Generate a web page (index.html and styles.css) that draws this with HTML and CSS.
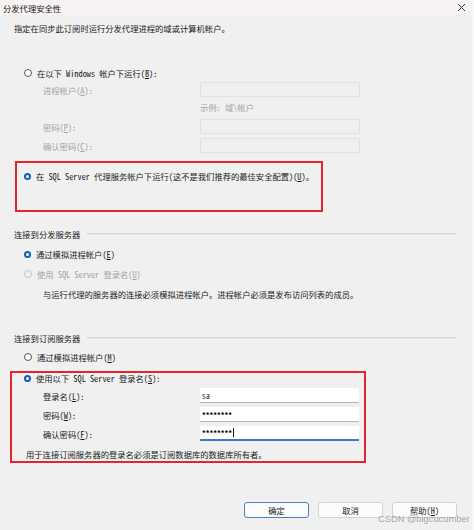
FILE: index.html
```html
<!DOCTYPE html>
<html>
<head>
<meta charset="utf-8">
<link rel="stylesheet" href="styles.css">
</head>
<body>
<div class="window">
  <div class="titlebar">
    <span class="title">分发代理安全性</span>
    <svg class="close" width="9" height="9" viewBox="0 0 9 9"><path d="M1 1L8 8M8 1L1 8" stroke="#333" stroke-width="1"/></svg>
  </div>
  <div class="content">
    <div class="intro">指定在同步此订阅时运行分发代理进程的域或计算机帐户。</div>

    <div class="radio-row r1"><span class="radio"></span><span>在以下 Windows 帐户下运行(<u>B</u>):</span></div>
    <div class="field-row f1 disabled"><span class="label">进程帐户(<u>A</u>):</span><span class="input"></span></div>
    <div class="example disabled">示例: 域\帐户</div>
    <div class="field-row f2 disabled"><span class="label">密码(<u>P</u>):</span><span class="input"></span></div>
    <div class="field-row disabled"><span class="label">确认密码(<u>C</u>):</span><span class="input"></span></div>

    <div class="redbox box1">
      <div class="radio-row"><span class="radio checked"></span><span>在 SQL Server 代理服务帐户下运行(这不是我们推荐的最佳安全配置)(<u>U</u>)。</span></div>
    </div>

    <div class="group g1"><span>连接到分发服务器</span><span class="line"></span></div>
    <div class="radio-row r3"><span class="radio checked"></span><span>通过模拟进程帐户(<u>E</u>)</span></div>
    <div class="radio-row r4 disabled"><span class="radio dis"></span><span>使用 SQL Server 登录名(<u>U</u>)</span></div>
    <div class="note n1">与运行代理的服务器的连接必须模拟进程帐户。进程帐户必须是发布访问列表的成员。</div>

    <div class="group g2"><span>连接到订阅服务器</span><span class="line"></span></div>
    <div class="radio-row r5"><span class="radio"></span><span>通过模拟进程帐户(<u>M</u>)</span></div>

    <div class="redbox box2">
      <div class="radio-row r6"><span class="radio checked"></span><span>使用以下 SQL Server 登录名(<u>S</u>):</span></div>
      <div class="field-row f3"><span class="label">登录名(<u>L</u>):</span><span class="input active">sa</span></div>
      <div class="field-row"><span class="label">密码(<u>W</u>):</span><span class="input active pw">********</span></div>
      <div class="field-row"><span class="label">确认密码(<u>F</u>):</span><span class="input active focus pw">********<span class="caret"></span></span></div>
      <div class="note n2">用于连接订阅服务器的登录名必须是订阅数据库的数据库所有者。</div>
    </div>

    <div class="buttons">
      <span class="btn default">确定</span>
      <span class="btn">取消</span>
      <span class="btn">帮助(<u>H</u>)</span>
    </div>
  </div>
  <div class="watermark">CSDN @bigcucumber</div>
</div>
</body>
</html>
```
FILE: styles.css
```css
html, body {
  margin: 0;
  padding: 0;
  background: #f7f7f7;
}
.window {
  position: relative;
  width: 472px;
  height: 530px;
  background: #f0f0f0;
  font-family: "Noto Sans CJK SC", "Noto Sans", sans-serif;
  font-size: 8.3px;
  font-feature-settings: "hwid" 1;
  color: #1a1a1a;
  overflow: hidden;
}
u { text-decoration: underline; text-underline-offset: 1px; }
.titlebar {
  height: 15px;
  background: #f6f3f2;
  display: flex;
  align-items: center;
  justify-content: space-between;
  padding: 0 6px 0 3px;
}
.close { display: block; }
.content {
  display: flex;
  flex-direction: column;
  padding: 0 16px 0 14px;
}
.intro { height: 12px; line-height: 12px; margin-top: 7px; }
.radio-row {
  height: 12px;
  line-height: 12px;
  display: flex;
  align-items: center;
  gap: 5px;
  padding-left: 10px;
  white-space: nowrap;
}
.radio {
  width: 6px;
  height: 6px;
  border: 1px solid #5a5a5a;
  border-radius: 50%;
  background: #fbfbfb;
  flex: none;
}
.radio.checked {
  width: 3px;
  height: 3px;
  border: 2.5px solid #1160b8;
  background: #fff;
}
.radio.dis { border-color: #c4c4c4; background: transparent; }
.r1 { margin-top: 33px; }
.disabled { color: #a3a3a3; }
.field-row {
  height: 19px;
  display: flex;
  align-items: center;
  padding-left: 29px;
}
.label { width: 157px; flex: none; white-space: nowrap; }
.input {
  width: 156px;
  height: 13px;
  border: 1px solid #e2e2e2;
  background: #efefef;
  box-sizing: content-box;
  display: flex;
  align-items: center;
  padding-left: 2px;
  font-size: 7.5px;
  color: #222;
  letter-spacing: 0.3px;
}
.f1 { margin-top: 1px; }
.example { height: 12px; line-height: 12px; margin-top: 2px; padding-left: 186px; }
.f2 { margin-top: 4px; }
.redbox {
  border: 2px solid #e3262d;
  display: flex;
  flex-direction: column;
}
.box1 {
  width: 308px;
  height: 51px;
  box-sizing: border-box;
  margin-top: 6px;
  margin-left: 1px;
  padding: 7px 0 0 0;
}
.box1 .radio-row { padding-left: 7px; }
.group {
  height: 12px;
  line-height: 12px;
  display: flex;
  align-items: center;
  gap: 7px;
}
.line {
  flex: 1;
  height: 1px;
  background: #d4d4d4;
  border-bottom: 1px solid #e6e6e6;
}
.g1 { margin-top: 16px; }
.r3 { margin-top: 8px; }
.r4 { margin-top: 8px; }
.n1 { height: 12px; line-height: 12px; margin-top: 8px; padding-left: 29px; }
.g2 { margin-top: 32px; }
.r5 { margin-top: 7px; }
.box2 {
  margin-top: 8px;
  margin-left: -4px;
  width: 352px;
  padding: 0 0 1px 0;
}
.box2 .radio-row { padding-left: 12px; height: 11px; line-height: 11px; }
.box2 .field-row { padding-left: 31px; }
.f3 { margin-top: 2px; }
.input.active {
  background: #fff;
  border: none;
  border-bottom: 1px solid #b7b7b7;
  width: 157px;
  height: 14px;
}
.input.pw { color: #000; font-weight: 700; letter-spacing: 0; }
.input.focus { border-bottom: 2px solid #3a7bc8; height: 13px; }
.caret {
  display: inline-block;
  width: 1px;
  height: 9px;
  background: #111;
  margin-left: 1px;
}
.n2 { height: 12px; line-height: 12px; margin-top: 5px; padding-left: 14px; }
.buttons {
  display: flex;
  justify-content: flex-end;
  gap: 9px;
  margin-top: 39px;
  margin-right: -1px;
}
.btn {
  width: 63px;
  height: 14px;
  border: 1px solid #d3d3d3;
  border-radius: 3px;
  background: #fcfcfc;
  display: flex;
  align-items: center;
  justify-content: center;
}
.btn.default { border-color: #4a7fc4; }
.watermark {
  position: absolute;
  left: 378px;
  top: 514px;
  font-family: "Liberation Sans", Arial, sans-serif;
  font-size: 9.3px;
  color: rgba(130, 130, 130, 0.7);
  white-space: nowrap;
}
```
